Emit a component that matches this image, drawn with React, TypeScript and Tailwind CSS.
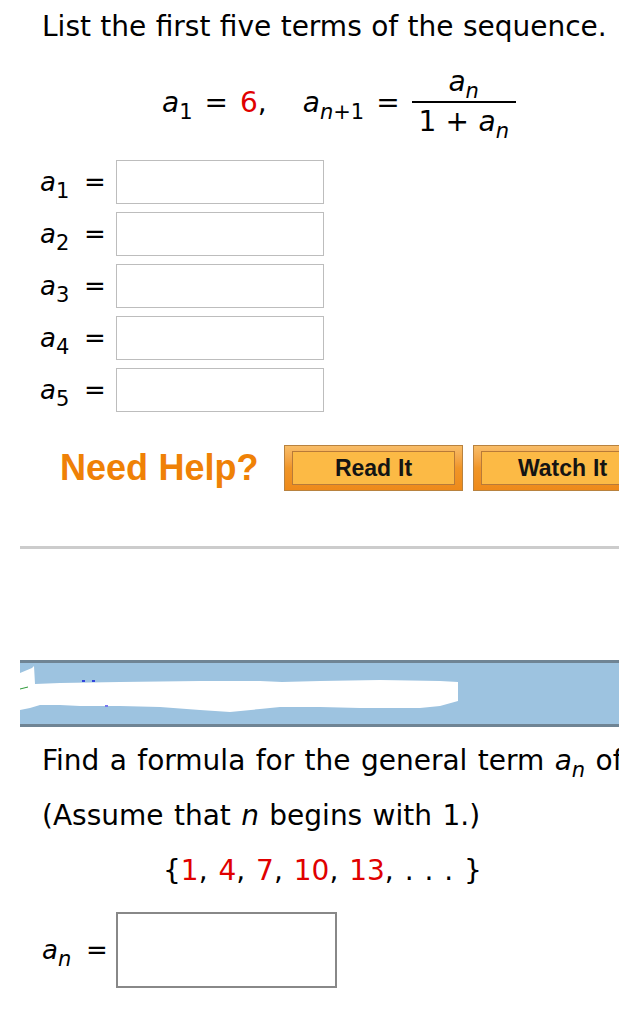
import React from 'react'

const verdana = { fontFamily: '"DejaVu Sans", Verdana, sans-serif' }

// italic math letter with an upright subscript
function Sym({ sub, italicSub = false }: { sub: React.ReactNode; italicSub?: boolean }) {
  return (
    <span className="whitespace-nowrap">
      <span className="italic">a</span>
      <span className={`relative top-[7px] text-[21px] ${italicSub ? 'italic' : ''}`}>{sub}</span>
    </span>
  )
}

function HelpButton({ label, className = '' }: { label: string; className?: string }) {
  return (
    <div
      className={`h-[46px] shrink-0 border border-[#b8823f] bg-gradient-to-b from-[#f8bd68] via-[#f09628] to-[#ee8a1a] px-[7px] py-[5px] leading-none ${className}`}
    >
      <div className="flex h-full items-center justify-center border border-[#b87a38] bg-[#fcba45] font-['Liberation_Sans',Arial,sans-serif] text-[23px] font-bold text-[#141414]">
        {label}
      </div>
    </div>
  )
}

export default function App() {
  const rows = ['1', '2', '3', '4', '5']

  return (
    <div
      className="relative h-[1024px] w-[619px] overflow-hidden bg-white text-[28px] text-black [word-spacing:0.5px]"
      style={verdana}
    >
      {/* question 1 */}
      <div className="whitespace-nowrap pl-[42px] pt-[10px] leading-[34px]">
        List the first five terms of the sequence.
      </div>

      <div className="mt-[23px] flex items-center whitespace-nowrap pl-[162px]">
        <Sym sub="1" />
        <span className="ml-[12px]">=</span>
        <span className="ml-[12px] text-[#e00000]">6</span>
        <span>,</span>
        <span className="ml-[36px]">
          <span className="italic">a</span>
          <span className="relative top-[7px] text-[21px]">
            <span className="italic">n</span>+1
          </span>
        </span>
        <span className="ml-[12px]">=</span>
        <div className="ml-[12px] inline-flex flex-col items-center leading-[30px]">
          <span className="pb-[2px]">
            <Sym sub="n" italicSub />
          </span>
          <span className="h-[2px] w-[104px] bg-black" />
          <span className="pt-[4px]">
            1 + <Sym sub="n" italicSub />
          </span>
        </div>
      </div>

      <div className="mt-[21px] flex flex-col gap-[8px]">
        {rows.map((r) => (
          <div key={r} className="flex h-[44px] items-center pl-[40px] text-[26px]">
            <span className="w-[44px]">
              <Sym sub={r} />
            </span>
            <span className="w-[32px]">=</span>
            <div className="h-[44px] w-[208px] border border-[#bdbdbd] bg-white" />
          </div>
        ))}
      </div>

      <div className="mt-[33px] flex h-[46px] items-center pl-[60px]">
        <span className="w-[224px] shrink-0 whitespace-nowrap font-['Liberation_Sans',Arial,sans-serif] text-[36px] font-bold leading-none text-[#ef8106]">
          Need Help?
        </span>
        <HelpButton label="Read It" className="w-[179px]" />
        <HelpButton label="Watch It" className="ml-[10px] w-[179px]" />
      </div>

      <div className="ml-[20px] mt-[55px] h-[3px] bg-[#cccccc]" />

      {/* redacted banner */}
      <div className="relative ml-[20px] mt-[111px] h-[67px] border-y-[3px] border-[#6f8494] bg-[#9dc3e0]">
        <svg className="absolute left-0 top-0" width="460" height="61" viewBox="0 0 460 61">
          <path
            d="M0 10 L12 5 L14 3 L15 21 L40 20 L100 19 L180 18 L240 18 L262 19 L300 18 L360 17 L420 18 L438 19 L438 38 L420 43 L400 45 L340 45 L300 44 L260 44 L240 46 L210 49 L180 47 L140 44 L100 43 L60 43 L40 42 L20 42 L10 45 L0 47 Z"
            fill="#ffffff"
          />
          <path d="M0 26 L8 24" stroke="#2f9a3a" strokeWidth="1" />
          <rect x="62" y="17" width="3" height="2" fill="#3344dd" />
          <rect x="72" y="17" width="3" height="2" fill="#3344dd" />
          <rect x="85" y="42" width="3" height="2" fill="#7777ee" />
        </svg>
      </div>

      {/* question 2 */}
      <div className="mt-[17px] whitespace-nowrap pl-[42px] leading-[34px] [word-spacing:1.5px]">
        Find a formula for the general term <Sym sub="n" italicSub /> of
      </div>
      <div className="mt-[19px] whitespace-nowrap pl-[42px] leading-[34px] [word-spacing:1.5px]">
        (Assume that <span className="italic">n</span> begins with 1.)
      </div>
      <div className="mt-[21px] whitespace-nowrap pl-[163px] leading-[34px] [word-spacing:2px]">
        {'{'}
        <span className="text-[#e00000]">1</span>, <span className="text-[#e00000]">4</span>,{' '}
        <span className="text-[#e00000]">7</span>, <span className="text-[#e00000]">10</span>,{' '}
        <span className="text-[#e00000]">13</span>, . . . {'}'}
      </div>

      <div className="mt-[24px] flex items-center pl-[42px] text-[26px]">
        <span className="w-[44px]">
          <Sym sub="n" italicSub />
        </span>
        <span className="w-[30px]">=</span>
        <div className="h-[76px] w-[221px] border-2 border-[#888888] bg-white" />
      </div>
    </div>
  )
}
